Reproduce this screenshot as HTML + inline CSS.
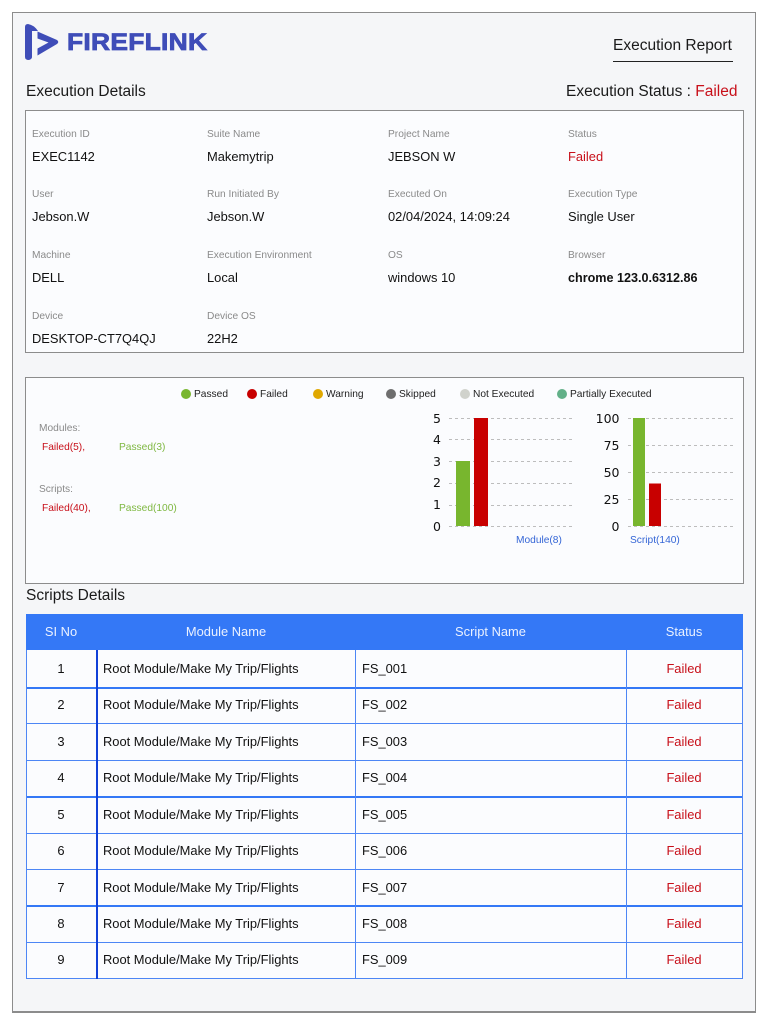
<!DOCTYPE html>
<html><head><meta charset="utf-8"><style>
html,body{margin:0;padding:0;width:768px;height:1024px;overflow:hidden;background:#fff;font-family:"Liberation Sans",sans-serif}
.a,.l,.v,.t,.c{position:absolute;white-space:nowrap}
.l{font-size:10.2px;line-height:12px;color:#8a8a8a}
.v{font-size:12.9px;line-height:16px;color:#111}
.t{font-size:15.5px;line-height:18px;color:#1a1a1a}
.c{font-size:12.9px;line-height:16px;color:#111}
.s{font-size:10.2px;line-height:12px}
.r{color:#c8101a}.g{color:#7fb842}
.k{position:absolute;width:10px;height:10px;border-radius:50%;top:389px}
.h{position:absolute;color:#eaf1ff;font-size:12.9px;line-height:16px;top:624px;text-align:center}
.hl{position:absolute;left:26px;width:717px;height:1px;background:#4d86f5}
.vl{position:absolute;top:650px;height:329px;width:1px;background:#4d86f5}
.n{width:70px;left:26px;text-align:center}
.f{width:116px;left:626px;text-align:center;color:#c8101a}
</style></head><body>
<div class="a" style="left:12px;top:12px;width:742px;height:998px;background:#f5f6f8;border:1px solid #8c8c8c;border-bottom-width:2px"></div>

<svg class="a" style="left:24px;top:22px" width="38" height="40" viewBox="0 0 38 40"><path d="M1 5Q1 2 4 2Q10 3 14 9L8 9L8 35Q8 37 5 38Q1 38 1 35Z" fill="#3f4db8"/><path d="M13.500 9.500L33 18Q35.500 20 33 22L13.500 33.500L13.500 26.500L24.500 20.500L13.500 16.500Z" fill="#3f4db8"/></svg>
<div class="a" style="left:67px;top:29px;font-size:24px;line-height:28px;font-weight:bold;color:#3f4db8;letter-spacing:.25px;-webkit-text-stroke:.8px #3f4db8;transform:scaleX(1.1);transform-origin:0 0">FIREFLINK</div>

<div class="t" style="left:613px;top:37px">Execution Report</div>
<div class="a" style="left:613px;top:61px;width:120px;height:1px;background:#222"></div>
<div class="t" style="left:26px;top:83px">Execution Details</div>
<div class="t" style="left:566px;top:83px">Execution Status : <span class="r">Failed</span></div>

<div class="a" style="left:25px;top:110px;width:717px;height:241px;background:#fbfcfe;border:1px solid #8c8c8c"></div>
<div class="l" style="left:32px;top:129px">Execution ID</div><div class="v" style="left:32px;top:149px">EXEC1142</div>
<div class="l" style="left:207px;top:129px">Suite Name</div><div class="v" style="left:207px;top:149px">Makemytrip</div>
<div class="l" style="left:388px;top:129px">Project Name</div><div class="v" style="left:388px;top:149px">JEBSON W</div>
<div class="l" style="left:568px;top:129px">Status</div><div class="v r" style="left:568px;top:149px;color:#c8101a">Failed</div>
<div class="l" style="left:32px;top:189px">User</div><div class="v" style="left:32px;top:209px">Jebson.W</div>
<div class="l" style="left:207px;top:189px">Run Initiated By</div><div class="v" style="left:207px;top:209px">Jebson.W</div>
<div class="l" style="left:388px;top:189px">Executed On</div><div class="v" style="left:388px;top:209px">02/04/2024, 14:09:24</div>
<div class="l" style="left:568px;top:189px">Execution Type</div><div class="v" style="left:568px;top:209px">Single User</div>
<div class="l" style="left:32px;top:250px">Machine</div><div class="v" style="left:32px;top:270px">DELL</div>
<div class="l" style="left:207px;top:250px">Execution Environment</div><div class="v" style="left:207px;top:270px">Local</div>
<div class="l" style="left:388px;top:250px">OS</div><div class="v" style="left:388px;top:270px">windows 10</div>
<div class="l" style="left:568px;top:250px">Browser</div><div class="v" style="left:568px;top:270px;font-weight:bold;font-size:12.6px">chrome 123.0.6312.86</div>
<div class="l" style="left:32px;top:311px">Device</div><div class="v" style="left:32px;top:331px">DESKTOP-CT7Q4QJ</div>
<div class="l" style="left:207px;top:311px">Device OS</div><div class="v" style="left:207px;top:331px">22H2</div>

<div class="a" style="left:25px;top:377px;width:717px;height:205px;background:#fbfcfe;border:1px solid #8c8c8c"></div>
<div class="k" style="left:181px;background:#78b62e"></div><div class="l" style="left:194px;top:389px;color:#222">Passed</div>
<div class="k" style="left:247px;background:#c80000"></div><div class="l" style="left:260px;top:389px;color:#222">Failed</div>
<div class="k" style="left:313px;background:#e0a800"></div><div class="l" style="left:326px;top:389px;color:#222">Warning</div>
<div class="k" style="left:386px;background:#6e6e6e"></div><div class="l" style="left:399px;top:389px;color:#222">Skipped</div>
<div class="k" style="left:460px;background:#d0d2cc"></div><div class="l" style="left:473px;top:389px;color:#222">Not Executed</div>
<div class="k" style="left:557px;background:#62b088"></div><div class="l" style="left:570px;top:389px;color:#222">Partially Executed</div>

<div class="l" style="left:39px;top:423px">Modules:</div>
<div class="s a r" style="left:42px;top:442px">Failed(5),</div><div class="s a g" style="left:119px;top:442px">Passed(3)</div>
<div class="l" style="left:39px;top:484px">Scripts:</div>
<div class="s a r" style="left:42px;top:503px">Failed(40),</div><div class="s a g" style="left:119px;top:503px">Passed(100)</div>

<svg class="a" style="left:420px;top:405px" width="330" height="140" viewBox="0 0 330 140" font-family="DejaVu Sans, sans-serif" font-size="12.5" fill="#111">
<g stroke="#bdbdbd" stroke-width="1" stroke-dasharray="3 3">
<path d="M29 13.500H152M29 34.500H152M29 56.500H152M29 78.500H152M29 100.500H152M29 121.500H152"/>
<path d="M208 13.500H313M208 40.500H313M208 67.500H313M208 94.500H313M208 121.500H313"/>
</g>
<rect x="36" y="56" width="14" height="65" fill="#78b62e"/><rect x="54" y="13" width="14" height="108" fill="#c80000"/>
<rect x="213" y="13" width="12" height="108" fill="#78b62e"/><rect x="229" y="78.500" width="12" height="42.500" fill="#c80000"/>
<g text-anchor="end"><text x="21" y="18">5</text><text x="21" y="39">4</text><text x="21" y="61">3</text><text x="21" y="82">2</text><text x="21" y="104">1</text><text x="21" y="126">0</text>
<text x="199.500" y="18">100</text><text x="199.500" y="45">75</text><text x="199.500" y="72">50</text><text x="199.500" y="99">25</text><text x="199.500" y="126">0</text></g>
</svg>
<div class="s a" style="left:516px;top:535px;color:#3566d6">Module(8)</div>
<div class="s a" style="left:630px;top:535px;color:#3566d6">Script(140)</div>

<div class="t" style="left:26px;top:587px">Scripts Details</div>

<div class="a" style="left:26px;top:650px;width:717px;height:329px;background:#fbfcfe"></div>
<div class="a" style="left:26px;top:614px;width:717px;height:36px;background:#3478f6"></div>
<div class="h" style="left:26px;width:70px">SI No</div>
<div class="h" style="left:97px;width:258px">Module Name</div>
<div class="h" style="left:355px;width:271px">Script Name</div>
<div class="h" style="left:626px;width:116px">Status</div>

<div class="hl" style="top:687px;height:2px;background:#3478f6"></div><div class="hl" style="top:723px"></div><div class="hl" style="top:760px"></div>
<div class="hl" style="top:796px;height:2px;background:#3478f6"></div><div class="hl" style="top:833px"></div><div class="hl" style="top:869px"></div>
<div class="hl" style="top:905px;height:2px;background:#3478f6"></div><div class="hl" style="top:942px"></div><div class="hl" style="top:978px"></div>
<div class="vl" style="left:26px"></div><div class="vl" style="left:96px;width:2px;background:#1040d8"></div><div class="vl" style="left:355px"></div><div class="vl" style="left:626px;"></div><div class="vl" style="left:742px"></div>

<div class="c n" style="top:661px">1</div><div class="c" style="left:103px;top:661px">Root Module/Make My Trip/Flights</div><div class="c" style="left:362px;top:661px">FS_001</div><div class="c f" style="top:661px">Failed</div>
<div class="c n" style="top:697px">2</div><div class="c" style="left:103px;top:697px">Root Module/Make My Trip/Flights</div><div class="c" style="left:362px;top:697px">FS_002</div><div class="c f" style="top:697px">Failed</div>
<div class="c n" style="top:734px">3</div><div class="c" style="left:103px;top:734px">Root Module/Make My Trip/Flights</div><div class="c" style="left:362px;top:734px">FS_003</div><div class="c f" style="top:734px">Failed</div>
<div class="c n" style="top:770px">4</div><div class="c" style="left:103px;top:770px">Root Module/Make My Trip/Flights</div><div class="c" style="left:362px;top:770px">FS_004</div><div class="c f" style="top:770px">Failed</div>
<div class="c n" style="top:807px">5</div><div class="c" style="left:103px;top:807px">Root Module/Make My Trip/Flights</div><div class="c" style="left:362px;top:807px">FS_005</div><div class="c f" style="top:807px">Failed</div>
<div class="c n" style="top:843px">6</div><div class="c" style="left:103px;top:843px">Root Module/Make My Trip/Flights</div><div class="c" style="left:362px;top:843px">FS_006</div><div class="c f" style="top:843px">Failed</div>
<div class="c n" style="top:880px">7</div><div class="c" style="left:103px;top:880px">Root Module/Make My Trip/Flights</div><div class="c" style="left:362px;top:880px">FS_007</div><div class="c f" style="top:880px">Failed</div>
<div class="c n" style="top:916px">8</div><div class="c" style="left:103px;top:916px">Root Module/Make My Trip/Flights</div><div class="c" style="left:362px;top:916px">FS_008</div><div class="c f" style="top:916px">Failed</div>
<div class="c n" style="top:952px">9</div><div class="c" style="left:103px;top:952px">Root Module/Make My Trip/Flights</div><div class="c" style="left:362px;top:952px">FS_009</div><div class="c f" style="top:952px">Failed</div>
</body></html>
